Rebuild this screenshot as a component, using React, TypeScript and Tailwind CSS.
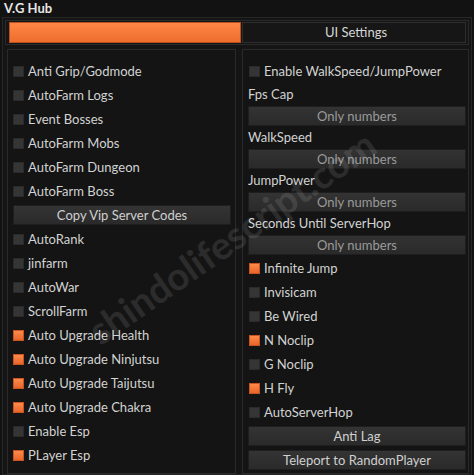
import React from "react";

const left: { t: string; on?: boolean; btn?: boolean }[] = [
  { t: "Anti Grip/Godmode" },
  { t: "AutoFarm Logs" },
  { t: "Event Bosses" },
  { t: "AutoFarm Mobs" },
  { t: "AutoFarm Dungeon" },
  { t: "AutoFarm Boss" },
  { t: "Copy Vip Server Codes", btn: true },
  { t: "AutoRank" },
  { t: "jinfarm" },
  { t: "AutoWar" },
  { t: "ScrollFarm" },
  { t: "Auto Upgrade Health", on: true },
  { t: "Auto Upgrade Ninjutsu", on: true },
  { t: "Auto Upgrade Taijutsu", on: true },
  { t: "Auto Upgrade Chakra", on: true },
  { t: "Enable Esp" },
  { t: "PLayer Esp", on: true },
];

function Box({ on }: { on?: boolean }) {
  return on ? (
    <div className="w-[11px] h-[11px] shrink-0 bg-gradient-to-b from-[#ff8a4a] to-[#e8652a] border border-[#c85520]" />
  ) : (
    <div className="w-[11px] h-[11px] shrink-0 bg-[#353535] border border-[#2a2a2a]" />
  );
}

function Check({ t, on }: { t: string; on?: boolean }) {
  return (
    <div className="h-[24px] flex items-center gap-[4px]">
      <Box on={on} />
      <span className="text-[13px] text-[#d2d2d2] leading-none">{t}</span>
    </div>
  );
}

function Btn({ t }: { t: string }) {
  return (
    <div className="h-[24px] flex items-center">
      <div className="w-full h-[20px] flex items-center justify-center bg-gradient-to-b from-[#343434] to-[#2a2a2a] border border-[#1e1e1e] text-[13px] text-[#d0d0d0] leading-none">
        {t}
      </div>
    </div>
  );
}

function Field({ label }: { label: string }) {
  return (
    <div className="flex flex-col">
      <div className="h-[23px] flex items-center text-[13px] text-[#d2d2d2] leading-none">{label}</div>
      <div className="h-[20px] flex items-center justify-center bg-gradient-to-b from-[#333333] to-[#2a2a2a] border border-[#1e1e1e] text-[13px] text-[#9a9a9a] leading-none">
        Only numbers
      </div>
    </div>
  );
}

export default function App() {
  return (
    <div
      className="relative w-[474px] h-[475px] bg-[#121212] overflow-hidden flex flex-col"
      style={{ fontFamily: "Lato, 'Open Sans', sans-serif" }}
    >
      <div className="h-[17px] pl-[4px] flex items-center text-[13px] font-bold text-[#e6e6e6] leading-none">
        V.G Hub
      </div>
      <div className="flex-1 mx-[2px] border border-[#262626] bg-[#151515] flex flex-col px-[2px] pt-[2px]">
        <div className="h-[25px] border border-[#2a2a2a] flex p-[1px] gap-[1px]">
          <div className="w-[232px] ml-[2px] bg-gradient-to-b from-[#ff8746] to-[#ee6d2d] border border-[#b95020]" />
          <div className="flex-1 mr-[1px] border border-[#2e2e2e] bg-[#161616] flex items-center justify-center text-[13px] text-[#d6d6d6] leading-none pl-[4px]">
            UI Settings
          </div>
        </div>
        <div className="flex gap-[6px] mt-[4px] pl-[2px] flex-1">
          <div className="w-[229px] border border-[#2a2a2a] bg-[#141414] pl-[5px] pr-[4px] pt-[9px]">
            {left.map((r) =>
              r.btn ? <Btn key={r.t} t={r.t} /> : <Check key={r.t} t={r.t} on={r.on} />
            )}
          </div>
          <div className="w-[227px] border border-[#2a2a2a] bg-[#141414] pl-[5px] pr-[2px] pt-[9px] flex flex-col">
            <div className="pl-[1px]">
              <Check t="Enable WalkSpeed/JumpPower" />
            </div>
            <Field label="Fps Cap" />
            <Field label="WalkSpeed" />
            <Field label="JumpPower" />
            <Field label="Seconds Until ServerHop" />
            <div className="pl-[1px] mt-[1px]">
              <Check t="Infinite Jump" on />
              <Check t="Invisicam" />
              <Check t="Be Wired" />
              <Check t="N Noclip" on />
              <Check t="G Noclip" />
              <Check t="H Fly" on />
              <Check t="AutoServerHop" />
            </div>
            <Btn t="Anti Lag" />
            <Btn t="Teleport to RandomPlayer" />
          </div>
        </div>
      </div>
      <div
        className="absolute left-[92px] top-[312px] text-[38px] font-bold text-white/[0.1] whitespace-nowrap pointer-events-none leading-[44px]"
        style={{ transform: "rotate(-35deg)", transformOrigin: "left center" }}
      >
        shindolifescript.com
      </div>
    </div>
  );
}
